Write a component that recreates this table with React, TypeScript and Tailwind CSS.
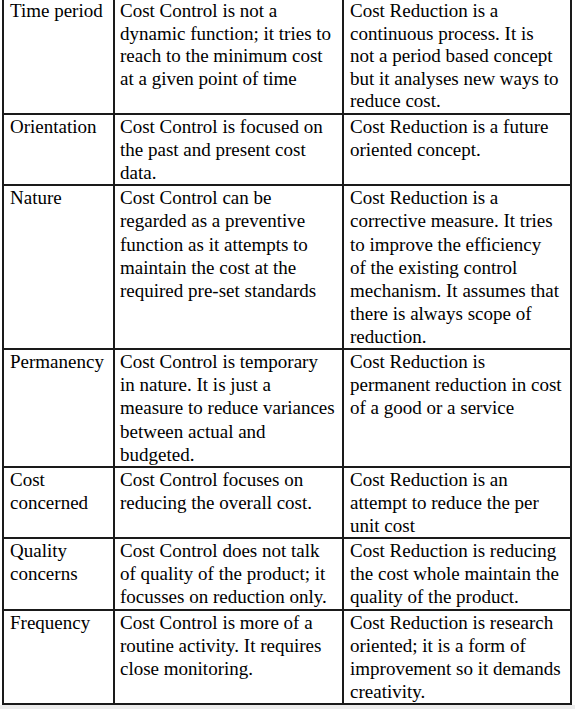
const rows: [string, string, string][] = [
  [
    "Time period",
    "Cost Control is not a dynamic function; it tries to reach to the minimum cost at a given point of time",
    "Cost Reduction is a continuous process. It is not a period based concept but it analyses new ways to reduce cost.",
  ],
  [
    "Orientation",
    "Cost Control is focused on the past and present cost data.",
    "Cost Reduction is a future oriented concept.",
  ],
  [
    "Nature",
    "Cost Control can be regarded as a preventive function as it attempts to maintain the cost at the required pre-set standards",
    // nbsp keeps "of the" together so it wraps like the source
    "Cost Reduction is a corrective measure. It tries to improve the efficiency of\u00a0the existing control mechanism. It assumes that there is always scope of reduction.",
  ],
  [
    "Permanency",
    "Cost Control is temporary in nature. It is just a measure to reduce variances between actual and budgeted.",
    "Cost Reduction is permanent reduction in cost of a good or a service",
  ],
  [
    "Cost concerned",
    "Cost Control focuses on reducing the overall cost.",
    "Cost Reduction is an attempt to reduce the per unit cost",
  ],
  [
    "Quality concerns",
    "Cost Control does not talk of quality of the product; it focusses on reduction only.",
    "Cost Reduction is reducing the cost whole maintain the quality of the product.",
  ],
  [
    "Frequency",
    "Cost Control is more of a routine activity. It requires close monitoring.",
    "Cost Reduction is research oriented; it is a form of improvement so it demands creativity.",
  ],
];

// per-column padding, tuned so lines wrap where the source table does
const cellPad = ["pl-[6px] pr-[4px]", "pl-[5px] pr-[5px]", "pl-[6px] pr-[8.2px]"];

export default function App() {
  return (
    <div className="flex h-[709px] flex-col overflow-hidden bg-white font-['Liberation_Serif','Times_New_Roman',serif] text-[19px] leading-[23.12px] text-black">
      {/* top border sits just above the visible crop */}
      <div className="ml-[2px] -mt-[2px] grid w-[570px] grid-cols-[111px_229px_228px] border-l-2 border-t-2 border-[#1a1a1a]">
        {rows.map((row, i) =>
          row.map((cell, j) => (
            <div
              key={`${i}-${j}`}
              className={`border-b-2 border-r-2 border-[#1a1a1a] ${cellPad[j]} ${i === 0 ? "leading-[22.6px]" : ""}`}
            >
              {cell}
            </div>
          ))
        )}
      </div>
      <div className="flex-1 bg-[#ececec]" />
    </div>
  );
}
